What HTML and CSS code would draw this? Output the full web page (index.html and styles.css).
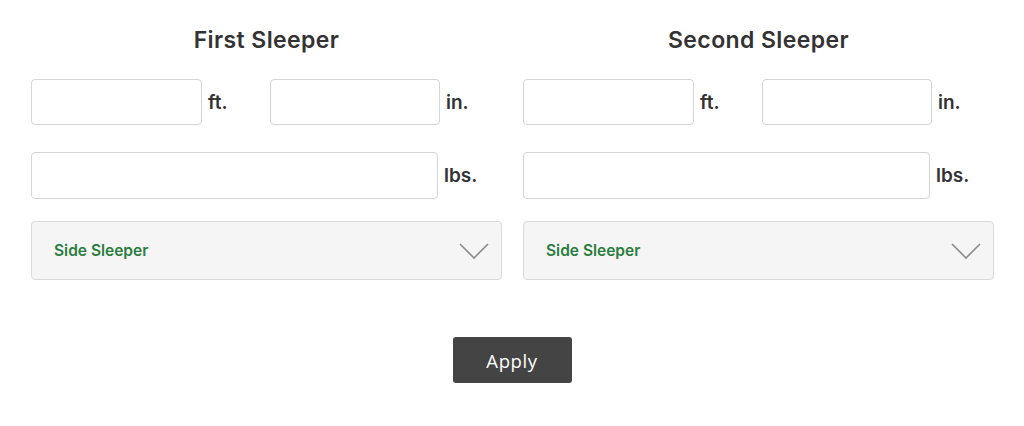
FILE: index.html
```html
<!DOCTYPE html>
<html>
<head>
    <meta charset="UTF-8">
    <link rel="stylesheet" href="styles.css">
</head>
<body>
    <div class="sleepers">
        <div class="sleeper">
            <h2>First Sleeper</h2>
            <div class="fila">
                <input class="campo corto" type="text">
                <span class="unidad ft">ft.</span>
                <input class="campo corto2" type="text">
                <span class="unidad">in.</span>
            </div>
            <div class="fila peso">
                <input class="campo largo" type="text">
                <span class="unidad">lbs.</span>
            </div>
            <div class="selector">
                <span>Side Sleeper</span>
                <svg width="30" height="18" viewBox="0 0 30 18"><path d="M1 2 L15 16 L29 2" fill="none" stroke="#8a8a8a" stroke-width="1.6"/></svg>
            </div>
        </div>
        <div class="sleeper">
            <h2>Second Sleeper</h2>
            <div class="fila">
                <input class="campo corto" type="text">
                <span class="unidad ft">ft.</span>
                <input class="campo corto2" type="text">
                <span class="unidad">in.</span>
            </div>
            <div class="fila peso">
                <input class="campo largo" type="text">
                <span class="unidad">lbs.</span>
            </div>
            <div class="selector">
                <span>Side Sleeper</span>
                <svg width="30" height="18" viewBox="0 0 30 18"><path d="M1 2 L15 16 L29 2" fill="none" stroke="#8a8a8a" stroke-width="1.6"/></svg>
            </div>
        </div>
    </div>
    <div class="acciones">
        <button class="boton">Apply</button>
    </div>
</body>
</html>
```

FILE: styles.css
```css
body {
    margin: 0;
    background-color: #ffffff;
    font-family: Inter, "Open Sans", sans-serif;
    color: #333333;
}

.sleepers {
    display: flex;
    gap: 21px;
    padding: 26px 0 0 31px;
}

.sleeper {
    width: 471px;
}

    .sleeper h2 {
        margin: 0 0 24px 0;
        text-align: center;
        font-size: 23px;
        font-weight: 600;
        letter-spacing: 0.4px;
        line-height: 29px;
        color: #333333;
    }

.fila {
    display: flex;
    align-items: center;
}

.peso {
    margin-top: 27px;
}

.campo {
    box-sizing: border-box;
    height: 46px;
    border: 1px solid #d4d4d4;
    border-radius: 4px;
    background-color: #ffffff;
    margin: 0;
}

.corto {
    width: 171px;
}

.corto2 {
    width: 170px;
}

.largo {
    width: 407px;
    height: 47px;
}

.unidad {
    margin-left: 6px;
    font-size: 19px;
    font-weight: 600;
    color: #333333;
}

.ft {
    width: 62px;
}

.selector {
    box-sizing: border-box;
    margin-top: 22px;
    height: 59px;
    border: 1px solid #d9d9d9;
    border-radius: 4px;
    background-color: #f5f5f5;
    display: flex;
    align-items: center;
    justify-content: space-between;
    padding: 0 12px 0 22px;
}

    .selector span {
        color: #2a7d3e;
        font-size: 15.5px;
        font-weight: 600;
    }

.acciones {
    display: flex;
    justify-content: center;
    padding-top: 57px;
}

.boton {
    width: 119px;
    height: 46px;
    border: none;
    border-radius: 3px;
    background-color: #444444;
    color: #ffffff;
    font-family: "Open Sans", sans-serif;
    font-size: 18.5px;
    letter-spacing: 0.6px;
}
```
